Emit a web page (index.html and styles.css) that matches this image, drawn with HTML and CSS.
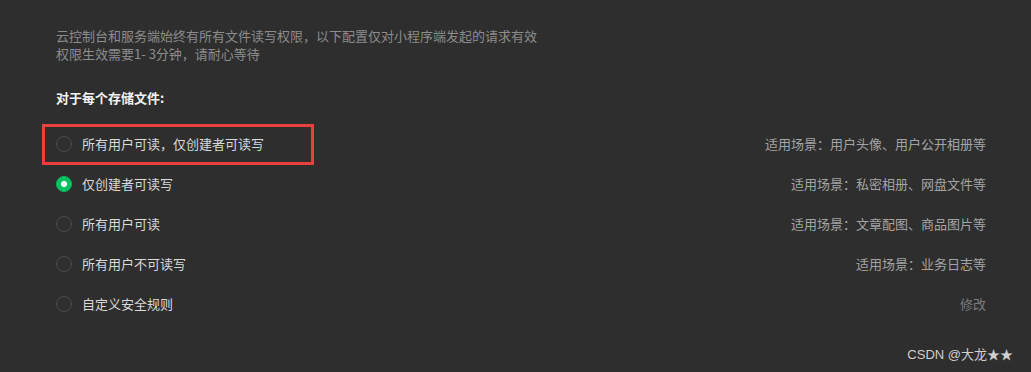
FILE: index.html
```html
<!DOCTYPE html>
<html lang="zh-CN">
<head>
<meta charset="utf-8">
<title>存储权限</title>
<link rel="stylesheet" href="styles.css">
</head>
<body>
<div class="page">
  <div class="desc">
    <p>云控制台和服务端始终有所有文件读写权限，以下配置仅对小程序端发起的请求有效</p>
    <p>权限生效需要1- 3分钟，请耐心等待</p>
  </div>
  <h3 class="title">对于每个存储文件:</h3>
  <ul class="options">
    <li class="option highlighted">
      <span class="radio"></span>
      <span class="label">所有用户可读，仅创建者可读写</span>
      <span class="scene">适用场景：用户头像、用户公开相册等</span>
    </li>
    <li class="option">
      <span class="radio checked"></span>
      <span class="label">仅创建者可读写</span>
      <span class="scene">适用场景：私密相册、网盘文件等</span>
    </li>
    <li class="option">
      <span class="radio"></span>
      <span class="label">所有用户可读</span>
      <span class="scene">适用场景：文章配图、商品图片等</span>
    </li>
    <li class="option">
      <span class="radio"></span>
      <span class="label">所有用户不可读写</span>
      <span class="scene">适用场景：业务日志等</span>
    </li>
    <li class="option">
      <span class="radio"></span>
      <span class="label">自定义安全规则</span>
      <span class="scene link">修改</span>
    </li>
  </ul>
  <div class="watermark">CSDN @大龙★★</div>
</div>
</body>
</html>
```
FILE: styles.css
```css
html, body {
  margin: 0;
  padding: 0;
  background: #2e2e2e;
}
body {
  font-family: "Noto Sans CJK SC", "Noto Sans", sans-serif;
  font-size: 13px;
  line-height: 18px;
  width: 1031px;
  height: 372px;
  overflow: hidden;
}
.page {
  position: relative;
  height: 372px;
  padding: 27px 45px 0 56px;
  box-sizing: border-box;
}
.desc p {
  margin: 0;
  color: #8c8c8c;
}
.title {
  margin: 26px 0 17px;
  font-size: 13px;
  line-height: 18px;
  font-weight: bold;
  color: #f2f2f2;
}
.options {
  list-style: none;
  margin: 0;
  padding: 0;
}
.option {
  position: relative;
  display: flex;
  align-items: center;
  height: 40px;
}
.radio {
  width: 16px;
  height: 16px;
  box-sizing: border-box;
  border: 1px solid #4a4a4a;
  border-radius: 50%;
  margin-right: 10px;
  flex: none;
  position: relative;
}
.radio.checked {
  background: #07c160;
  border-color: #07c160;
}
.radio.checked::after {
  content: "";
  position: absolute;
  left: 4px;
  top: 4px;
  width: 6px;
  height: 6px;
  border-radius: 50%;
  background: #fff;
}
.label {
  color: #d9d9d9;
  flex: 1;
}
.scene {
  color: #a3a3a3;
}
.scene.link {
  color: #7c7c7c;
}
.highlighted::before {
  content: "";
  position: absolute;
  left: -14px;
  top: 0;
  width: 272px;
  height: 41px;
  box-sizing: border-box;
  border: 3px solid #e8403d;
}
.watermark {
  position: absolute;
  right: 18px;
  bottom: 8px;
  font-family: "Liberation Sans", "Noto Sans CJK SC", sans-serif;
  font-size: 13px;
  color: #cfcfcf;
}
```
